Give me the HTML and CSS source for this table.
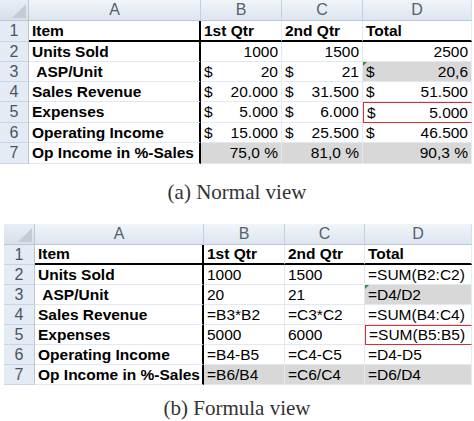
FILE: index.html
```html
<!DOCTYPE html>
<html>
<head>
<meta charset="utf-8">
<link rel="stylesheet" href="styles.css">
</head>
<body>
<div class="fig">
  <div class="sheet sheet-a">
    <div class="corner"><span class="tri"></span></div>
    <div class="colh">A</div><div class="colh">B</div><div class="colh">C</div><div class="colh last">D</div>

    <div class="rowh">1</div>
    <div class="c lbl top sepA">Item</div><div class="c lbl top">1st Qtr</div><div class="c lbl top">2nd Qtr</div><div class="c lbl top last">Total</div>

    <div class="rowh">2</div>
    <div class="c lbl sepA">Units Sold</div><div class="c num">1000</div><div class="c num">1500</div><div class="c num last">2500</div>

    <div class="rowh">3</div>
    <div class="c lbl sepA">&nbsp;ASP/Unit</div><div class="c cur"><span>$</span><span>20</span></div><div class="c cur"><span>$</span><span>21</span></div><div class="c cur gray last mark"><span>$</span><span>20,6</span></div>

    <div class="rowh">4</div>
    <div class="c lbl sepA">Sales Revenue</div><div class="c cur"><span>$</span><span>20.000</span></div><div class="c cur"><span>$</span><span>31.500</span></div><div class="c cur last"><span>$</span><span>51.500</span></div>

    <div class="rowh">5</div>
    <div class="c lbl sepA">Expenses</div><div class="c cur"><span>$</span><span>5.000</span></div><div class="c cur"><span>$</span><span>6.000</span></div><div class="c cur last sel"><span>$</span><span>5.000</span></div>

    <div class="rowh">6</div>
    <div class="c lbl sepA">Operating Income</div><div class="c cur"><span>$</span><span>15.000</span></div><div class="c cur"><span>$</span><span>25.500</span></div><div class="c cur last"><span>$</span><span>46.500</span></div>

    <div class="rowh">7</div>
    <div class="c lbl sepA">Op Income in %-Sales</div><div class="c num gray">75,0 %</div><div class="c num gray">81,0 %</div><div class="c num gray last">90,3 %</div>
  </div>
  <div class="caption cap-a">(a) Normal view</div>

  <div class="sheet sheet-b">
    <div class="corner"><span class="tri"></span></div>
    <div class="colh">A</div><div class="colh">B</div><div class="colh">C</div><div class="colh last">D</div>

    <div class="rowh">1</div>
    <div class="c lbl top sepA">Item</div><div class="c lbl top">1st Qtr</div><div class="c lbl top">2nd Qtr</div><div class="c lbl top last">Total</div>

    <div class="rowh">2</div>
    <div class="c lbl sepA">Units Sold</div><div class="c txt">1000</div><div class="c txt">1500</div><div class="c txt last">=SUM(B2:C2)</div>

    <div class="rowh">3</div>
    <div class="c lbl sepA">&nbsp;ASP/Unit</div><div class="c txt">20</div><div class="c txt">21</div><div class="c txt gray last mark">=D4/D2</div>

    <div class="rowh">4</div>
    <div class="c lbl sepA">Sales Revenue</div><div class="c txt">=B3*B2</div><div class="c txt">=C3*C2</div><div class="c txt last">=SUM(B4:C4)</div>

    <div class="rowh">5</div>
    <div class="c lbl sepA">Expenses</div><div class="c txt">5000</div><div class="c txt">6000</div><div class="c txt last sel">=SUM(B5:B5)</div>

    <div class="rowh">6</div>
    <div class="c lbl sepA">Operating Income</div><div class="c txt">=B4-B5</div><div class="c txt">=C4-C5</div><div class="c txt last">=D4-D5</div>

    <div class="rowh">7</div>
    <div class="c lbl sepA">Op Income in %-Sales</div><div class="c txt gray">=B6/B4</div><div class="c txt gray">=C6/C4</div><div class="c txt gray last">=D6/D4</div>
  </div>
  <div class="caption cap-b">(b) Formula view</div>
</div>
</body>
</html>
```
FILE: styles.css
```css
html, body {
  margin: 0;
  padding: 0;
  background: #ffffff;
}
.fig {
  width: 474px;
  display: flex;
  flex-direction: column;
}
.fig > * {
  flex-shrink: 0;
}
.sheet {
  display: grid;
  font-family: "Liberation Sans", Arial, sans-serif;
  font-size: 15.5px;
  color: #000;
}
.sheet-a {
  width: 472px;
  grid-template-columns: 29px 172px 81px 81px 109px;
  grid-template-rows: 21px 21px 20px 20px 20px 21px 20px 21px;
}
.sheet-b {
  margin-left: 4px;
  width: 468px;
  grid-template-columns: 31px 169px 81px 80px 107px;
  grid-template-rows: 21px 20px 20px 20px 20px 20px 20px 20px;
}
.corner {
  background: linear-gradient(#e9eef5, #d7dfe9);
  border-right: 1px solid #b9c7d8;
  border-bottom: 1px solid #b9c7d8;
  position: relative;
  overflow: hidden;
}
.tri {
  position: absolute;
  right: 2px;
  bottom: 2px;
  width: 14px;
  height: 14px;
  background: #c3cbd5;
  clip-path: polygon(100% 0, 100% 100%, 0 100%);
}
.colh {
  background: linear-gradient(#f1f5fa, #dde5ef);
  border-right: 1px solid #c3cfdd;
  border-bottom: 1px solid #b9c7d8;
  color: #55606c;
  font-size: 16px;
  display: flex;
  align-items: center;
  justify-content: center;
}
.colh.last {
  border-right: 1px solid #d7dfe8;
}
.rowh {
  background: #e4ebf5;
  border-bottom: 1px solid #c9d5e4;
  border-right: 1px solid #b9c7d8;
  color: #4a5560;
  font-size: 16px;
  display: flex;
  align-items: center;
  justify-content: center;
}
.c {
  border-bottom: 1px solid #e2e9f2;
  border-right: 1px solid #e2e9f2;
  display: flex;
  align-items: center;
  padding: 0 3px;
  white-space: nowrap;
  overflow: hidden;
  box-sizing: border-box;
  position: relative;
}
.c.last {
  border-right: 1px solid #e7edf4;
}
.lbl {
  font-weight: bold;
}
.top {
  border-bottom: 2px solid #000;
}
.sepA {
  border-right: 2px solid #000;
}
.num {
  justify-content: flex-end;
}
.cur {
  justify-content: space-between;
}
.txt {
  justify-content: flex-start;
}
.gray {
  background: #d8d8d8;
}
.sel {
  border: 1px solid #e3282f;
  border-right: 2px solid #e3282f;
}
.mark::before {
  content: "";
  position: absolute;
  left: 0;
  top: 0;
  width: 0;
  height: 0;
  border-top: 4px solid #3a8c3a;
  border-right: 4px solid transparent;
}
.caption {
  font-family: "Liberation Serif", "DejaVu Serif", serif;
  font-size: 21px;
  color: #333;
  display: flex;
  align-items: center;
  justify-content: center;
  box-sizing: border-box;
}
.cap-a {
  height: 60px;
  padding-bottom: 4px;
}
.cap-b {
  height: 36px;
  padding-top: 10px;
}
```
